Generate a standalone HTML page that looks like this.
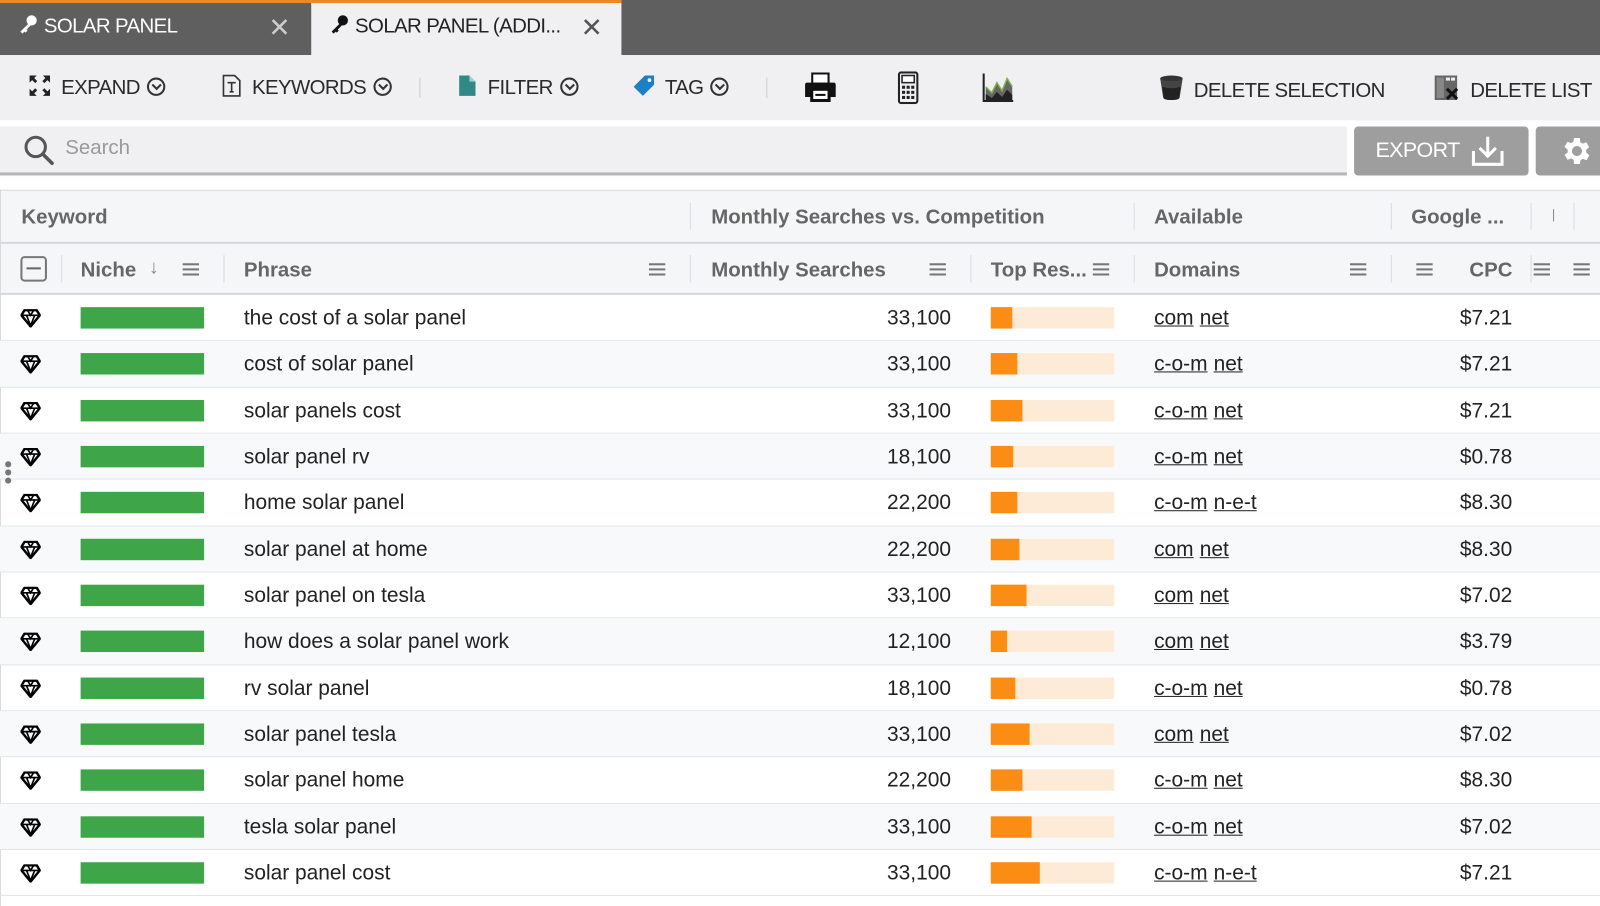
<!DOCTYPE html>
<html><head><meta charset="utf-8">
<style>
*{margin:0;padding:0;box-sizing:border-box}
body{width:1600px;height:884px;overflow:hidden;background:#fff;font-family:"Liberation Sans",sans-serif;color:#222;position:relative}
#w{position:absolute;left:0;top:0;width:1568px;height:884px;transform:scale(1.0204);transform-origin:0 0}
.a{position:absolute}
.n{font-family:"Liberation Sans Narrow","Liberation Sans",sans-serif;letter-spacing:-0.6px}
.tb{font-size:20px;color:#2a2a2a;top:73px;white-space:nowrap}
.chev{display:inline-block;width:18px;height:18px;border:2px solid #333;border-radius:50%;vertical-align:-2px;position:relative;margin-left:2px}
.chev:after{content:"";position:absolute;left:4px;top:2px;width:5px;height:5px;border-right:2px solid #333;border-bottom:2px solid #333;transform:rotate(45deg)}
.hd{color:#666;font-size:20px;font-weight:bold}
.vs{position:absolute;width:1px;background:#d8dce0}
.mn{position:absolute;width:16px;height:12px;border-top:2px solid #777;border-bottom:2px solid #777}
.mn:after{content:"";position:absolute;left:0;right:0;top:3px;border-top:2px solid #777}
.r{position:absolute;left:0;width:1600px;height:45.33px;border-bottom:1px solid #e2e5e8}
.r.o{background:#f8f9fb}
.r div{position:absolute}
.g{left:79px;top:12px;width:121px;height:21px;background:#3ea648}
.p{left:239px;top:11px;font-size:20.5px;color:#222}
.m{right:668px;top:11px;font-size:20.5px}
.bg{left:971px;top:12px;width:121px;height:21px;background:#fdebd8}
.ob{left:971px;top:12px;height:21px;background:#fb8c14}
.d{left:1131px;top:11px;font-size:20.5px}
.d u{margin-right:6px;text-decoration-thickness:1px}
.c{right:118px;top:11px;font-size:20.5px}
.dm{left:20px;top:14px}
</style></head><body><div id="w">
<div class="a" style="left:0;top:0;width:1600px;height:54px;background:#5f5f5f"></div>
<div class="a" style="left:0;top:0;width:305px;height:3px;background:#e88a2a"></div>
<div class="a" style="left:305px;top:0;width:304px;height:54px;background:#f0f0f2;border-top:3px solid #e88a2a"></div>
<div class="a n" style="left:18px;top:14px;font-size:20px;color:#fff">
<svg width="20" height="20" viewBox="0 0 20 20" style="vertical-align:-2px"><circle cx="13" cy="6" r="5" fill="#fff"/><path d="M10 9 L2 17 L4 19 L6 17 L7 18 L9 16 L8 15 L12 11Z" fill="#fff"/></svg> SOLAR PANEL</div>
<div class="a" style="left:263px;top:12px;font-size:26px;color:#ccc">✕</div>
<div class="a n" style="left:323px;top:14px;font-size:20px;color:#222">
<svg width="20" height="20" viewBox="0 0 20 20" style="vertical-align:-2px"><circle cx="13" cy="6" r="5" fill="#111"/><path d="M10 9 L2 17 L4 19 L6 17 L7 18 L9 16 L8 15 L12 11Z" fill="#111"/></svg> SOLAR PANEL (ADDI...</div>
<div class="a" style="left:569px;top:12px;font-size:26px;color:#555">✕</div>
<div class="a" style="left:0;top:54px;width:1600px;height:64px;background:#f0f0f2"></div>
<div class="a tb n" style="left:28px"><svg width="22" height="22" viewBox="0 0 22 22" style="vertical-align:-3px"><path d="M1 1h7l-2.5 2.5 3 3-2 2-3-3L1 8zM21 1v7l-2.5-2.5-3 3-2-2 3-3L14 1zM1 21v-7l2.5 2.5 3-3 2 2-3 3L8 21zM21 21h-7l2.5-2.5-3-3 2-2 3 3L21 14z" fill="#222"/></svg>&nbsp; EXPAND <span class="chev"></span></div>
<div class="a tb n" style="left:217px"><svg width="20" height="22" viewBox="0 0 20 22" style="vertical-align:-3px"><path d="M2 1h11l5 5v15H2z" fill="none" stroke="#333" stroke-width="1.6"/><path d="M6 8h8M10 8v9M8 17h4" stroke="#333" stroke-width="1.6"/></svg>&nbsp; KEYWORDS <span class="chev"></span></div>
<div class="a" style="left:411px;top:76px;width:1px;height:20px;background:#ccc"></div>
<div class="a tb n" style="left:448px"><svg width="20" height="22" viewBox="0 0 20 22" style="vertical-align:-3px"><path d="M2 1h10l6 6v14H2z" fill="#2f8a86"/><path d="M12 1v6h6" fill="#9cd0cc"/></svg>&nbsp; FILTER <span class="chev"></span></div>
<div class="a tb n" style="left:620px"><svg width="22" height="22" viewBox="0 0 22 22" style="vertical-align:-3px"><path d="M12 1h9v9L10 21 1 12z" fill="#1d7fc4"/><circle cx="16.5" cy="5.5" r="1.8" fill="#fff"/></svg>&nbsp; TAG <span class="chev"></span></div>
<div class="a" style="left:751px;top:76px;width:1px;height:20px;background:#ccc"></div>
<svg class="a" style="left:788px;top:71px" width="32" height="30" viewBox="0 0 32 30"><rect x="8" y="1" width="16" height="10" fill="#fff" stroke="#111" stroke-width="2"/><path d="M3 10h26q2 0 2 2v12h-5v5H6v-5H1V12q0-2 2-2z" fill="#111"/><rect x="9" y="18" width="14" height="8" fill="#fff"/><rect x="11" y="21" width="10" height="2" fill="#111"/></svg>
<svg class="a" style="left:879px;top:70px" width="22" height="32" viewBox="0 0 22 32"><rect x="2" y="1" width="18" height="30" rx="2" fill="none" stroke="#222" stroke-width="2"/><rect x="5" y="4" width="12" height="7" fill="#fff" stroke="#222" stroke-width="1.5"/><g fill="#222"><rect x="5" y="14" width="3" height="3"/><rect x="9.5" y="14" width="3" height="3"/><rect x="14" y="14" width="3" height="3"/><rect x="5" y="19" width="3" height="3"/><rect x="9.5" y="19" width="3" height="3"/><rect x="14" y="19" width="3" height="3"/><rect x="5" y="24" width="3" height="3"/><rect x="9.5" y="24" width="3" height="3"/><rect x="14" y="24" width="3" height="3"/></g></svg>
<svg class="a" style="left:962px;top:71px" width="32" height="30" viewBox="0 0 32 30"><path d="M2 1v27h29" fill="none" stroke="#222" stroke-width="2"/><path d="M4 27V14l6 6 5-10 5 8 5-12 5 8v13z" fill="#666"/><path d="M4 27v-6l6 4 5-6 5 5 5-7 5 5v5z" fill="#222"/><path d="M4 14l6 6 5-10 5 8 5-12 5 8" fill="none" stroke="#7fb24a" stroke-width="1.5"/></svg>
<div class="a tb n" style="left:1136px"><svg width="24" height="26" viewBox="0 0 24 26" style="vertical-align:-4px"><ellipse cx="12" cy="4" rx="11" ry="3" fill="#333"/><path d="M1 4l3 19q1 2 8 2t8-2l3-19q-5 3-11 3T1 4z" fill="#444"/><path d="M3 12q9 3 18 0l-1.5 11q-1 2-7.5 2t-7.5-2z" fill="#222"/></svg>&nbsp; DELETE SELECTION</div>
<div class="a tb n" style="left:1405px"><svg width="26" height="26" viewBox="0 0 26 26" style="vertical-align:-4px"><rect x="1" y="1" width="22" height="24" fill="#666"/><rect x="12" y="3" width="4" height="3" fill="#eee"/><rect x="17" y="3" width="4" height="3" fill="#eee"/><rect x="3" y="3" width="7" height="20" fill="#888"/><path d="M13 14l10 10M23 14L13 24" stroke="#111" stroke-width="3"/></svg>&nbsp; DELETE LIST</div>
<div class="a" style="left:0;top:118px;width:1600px;height:68px;background:#fff"></div>
<div class="a" style="left:0;top:124px;width:1320px;height:48px;background:#f0f0f2;border-bottom:3px solid #b5b5b5"></div>
<svg class="a" style="left:22px;top:131px" width="32" height="32" viewBox="0 0 32 32"><circle cx="13" cy="13" r="9.5" fill="none" stroke="#555" stroke-width="3"/><path d="M20 20l9 9" stroke="#555" stroke-width="3.5" stroke-linecap="round"/></svg>
<div class="a" style="left:64px;top:134px;font-size:20px;color:#999">Search</div>
<div class="a n" style="left:1327px;top:124px;width:171px;height:48px;background:#9e9e9e;border-radius:4px;color:#fff;font-size:21px;padding:12px 0 0 21px">EXPORT<svg width="34" height="32" viewBox="0 0 34 32" style="position:absolute;left:114px;top:8px"><path d="M3 16v13h28V16M17 2v19M9 13l8 8 8-8" fill="none" stroke="#fff" stroke-width="3"/></svg></div>
<div class="a" style="left:1505px;top:124px;width:95px;height:48px;background:#9e9e9e;border-radius:4px"></div>
<svg class="a" style="left:1527px;top:131px" width="34" height="34" viewBox="0 0 24 24"><path fill="#fff" d="M19.4 13a7.5 7.5 0 000-2l2.1-1.6-2-3.5-2.5 1a7 7 0 00-1.7-1L15 3h-4l-.4 2.6a7 7 0 00-1.7 1l-2.5-1-2 3.5L6.6 11a7.5 7.5 0 000 2l-2.1 1.6 2 3.5 2.5-1a7 7 0 001.7 1L11 21h4l.4-2.6a7 7 0 001.7-1l2.5 1 2-3.5zM13 15.5a3.5 3.5 0 110-7 3.5 3.5 0 010 7z"/></svg>
<div class="a" style="left:0;top:186px;width:1600px;height:102px;background:#f5f6f8;border-top:1px solid #d8dbde;border-left:1px solid #d8dbde"></div>
<div class="a" style="left:0;top:237px;width:1600px;height:2px;background:#d5d8dc"></div>
<div class="a" style="left:0;top:287px;width:1600px;height:2px;background:#d5d8dc"></div>
<div class="a hd" style="left:21px;top:202px">Keyword</div>
<div class="vs" style="left:676px;top:199px;height:26px"></div>
<div class="a hd" style="left:697px;top:202px">Monthly Searches vs. Competition</div>
<div class="vs" style="left:1111px;top:199px;height:26px"></div>
<div class="a hd" style="left:1131px;top:202px">Available</div>
<div class="vs" style="left:1363px;top:199px;height:26px"></div>
<div class="a hd" style="left:1383px;top:202px">Google ...</div>
<div class="vs" style="left:1500px;top:199px;height:26px"></div>
<div class="a" style="left:1522px;top:205px;width:1px;height:12px;background:#888"></div>
<div class="vs" style="left:1542px;top:199px;height:26px"></div>
<div class="a" style="left:20px;top:251px;width:26px;height:25px;border:2px solid #777;border-radius:4px"></div>
<div class="a" style="left:26px;top:262px;width:14px;height:2px;background:#666"></div>
<div class="vs" style="left:60px;top:250px;height:27px"></div>
<div class="a hd" style="left:79px;top:254px">Niche</div>
<div class="a" style="left:146px;top:252px;font-size:19px;color:#888">↓</div>
<div class="mn" style="left:179px;top:258px"></div>
<div class="vs" style="left:219px;top:250px;height:27px"></div>
<div class="a hd" style="left:239px;top:254px">Phrase</div>
<div class="mn" style="left:636px;top:258px"></div>
<div class="vs" style="left:676px;top:250px;height:27px"></div>
<div class="a hd" style="left:697px;top:254px">Monthly Searches</div>
<div class="mn" style="left:911px;top:258px"></div>
<div class="vs" style="left:951px;top:250px;height:27px"></div>
<div class="a hd" style="left:971px;top:254px">Top Res...</div>
<div class="mn" style="left:1071px;top:258px"></div>
<div class="vs" style="left:1111px;top:250px;height:27px"></div>
<div class="a hd" style="left:1131px;top:254px">Domains</div>
<div class="mn" style="left:1323px;top:258px"></div>
<div class="vs" style="left:1363px;top:250px;height:27px"></div>
<div class="mn" style="left:1388px;top:258px"></div>
<div class="a hd" style="left:1440px;top:254px">CPC</div>
<div class="vs" style="left:1500px;top:250px;height:27px"></div>
<div class="mn" style="left:1503px;top:258px"></div>
<div class="mn" style="left:1542px;top:258px"></div>
<div class="a" style="left:0;top:288px;width:1px;height:600px;background:#d8dbde"></div>
<svg width="0" height="0" style="position:absolute"><defs><symbol id="dia" viewBox="0 0 20 18"><path d="M4 1h12l3 5-9 11L1 6z" fill="none" stroke="#000" stroke-width="2.4" stroke-linejoin="round"/><path d="M1 6h18M7 1l3 5 3-5M6 6l4 10 4-10" fill="none" stroke="#000" stroke-width="1.6"/></symbol></defs></svg>
<div style="position:absolute;left:0;top:289px">
<div class="r" style="top:0"><div class="dm"><svg width="20" height="18"><use href="#dia"/></svg></div><div class="g"></div><div class="p">the cost of a solar panel</div><div class="m">33,100</div><div class="bg"></div><div class="ob" style="width:21px"></div><div class="d"><u>com</u><u>net</u></div><div class="c">$7.21</div></div>
<div class="r o" style="top:45.33px"><div class="dm"><svg width="20" height="18"><use href="#dia"/></svg></div><div class="g"></div><div class="p">cost of solar panel</div><div class="m">33,100</div><div class="bg"></div><div class="ob" style="width:26px"></div><div class="d"><u>c-o-m</u><u>net</u></div><div class="c">$7.21</div></div>
<div class="r" style="top:90.67px"><div class="dm"><svg width="20" height="18"><use href="#dia"/></svg></div><div class="g"></div><div class="p">solar panels cost</div><div class="m">33,100</div><div class="bg"></div><div class="ob" style="width:31px"></div><div class="d"><u>c-o-m</u><u>net</u></div><div class="c">$7.21</div></div>
<div class="r o" style="top:136px"><div class="dm"><svg width="20" height="18"><use href="#dia"/></svg></div><div class="g"></div><div class="p">solar panel rv</div><div class="m">18,100</div><div class="bg"></div><div class="ob" style="width:22px"></div><div class="d"><u>c-o-m</u><u>net</u></div><div class="c">$0.78</div></div>
<div class="r" style="top:181.33px"><div class="dm"><svg width="20" height="18"><use href="#dia"/></svg></div><div class="g"></div><div class="p">home solar panel</div><div class="m">22,200</div><div class="bg"></div><div class="ob" style="width:26px"></div><div class="d"><u>c-o-m</u><u>n-e-t</u></div><div class="c">$8.30</div></div>
<div class="r o" style="top:226.67px"><div class="dm"><svg width="20" height="18"><use href="#dia"/></svg></div><div class="g"></div><div class="p">solar panel at home</div><div class="m">22,200</div><div class="bg"></div><div class="ob" style="width:28px"></div><div class="d"><u>com</u><u>net</u></div><div class="c">$8.30</div></div>
<div class="r" style="top:272px"><div class="dm"><svg width="20" height="18"><use href="#dia"/></svg></div><div class="g"></div><div class="p">solar panel on tesla</div><div class="m">33,100</div><div class="bg"></div><div class="ob" style="width:35px"></div><div class="d"><u>com</u><u>net</u></div><div class="c">$7.02</div></div>
<div class="r o" style="top:317.33px"><div class="dm"><svg width="20" height="18"><use href="#dia"/></svg></div><div class="g"></div><div class="p">how does a solar panel work</div><div class="m">12,100</div><div class="bg"></div><div class="ob" style="width:16px"></div><div class="d"><u>com</u><u>net</u></div><div class="c">$3.79</div></div>
<div class="r" style="top:362.67px"><div class="dm"><svg width="20" height="18"><use href="#dia"/></svg></div><div class="g"></div><div class="p">rv solar panel</div><div class="m">18,100</div><div class="bg"></div><div class="ob" style="width:24px"></div><div class="d"><u>c-o-m</u><u>net</u></div><div class="c">$0.78</div></div>
<div class="r o" style="top:408px"><div class="dm"><svg width="20" height="18"><use href="#dia"/></svg></div><div class="g"></div><div class="p">solar panel tesla</div><div class="m">33,100</div><div class="bg"></div><div class="ob" style="width:38px"></div><div class="d"><u>com</u><u>net</u></div><div class="c">$7.02</div></div>
<div class="r" style="top:453.33px"><div class="dm"><svg width="20" height="18"><use href="#dia"/></svg></div><div class="g"></div><div class="p">solar panel home</div><div class="m">22,200</div><div class="bg"></div><div class="ob" style="width:31px"></div><div class="d"><u>c-o-m</u><u>net</u></div><div class="c">$8.30</div></div>
<div class="r o" style="top:498.67px"><div class="dm"><svg width="20" height="18"><use href="#dia"/></svg></div><div class="g"></div><div class="p">tesla solar panel</div><div class="m">33,100</div><div class="bg"></div><div class="ob" style="width:40px"></div><div class="d"><u>c-o-m</u><u>net</u></div><div class="c">$7.02</div></div>
<div class="r" style="top:544px"><div class="dm"><svg width="20" height="18"><use href="#dia"/></svg></div><div class="g"></div><div class="p">solar panel cost</div><div class="m">33,100</div><div class="bg"></div><div class="ob" style="width:48px"></div><div class="d"><u>c-o-m</u><u>n-e-t</u></div><div class="c">$7.21</div></div>
</div>
<div class="a" style="left:5px;top:452px;width:6px;height:6px;border-radius:50%;background:#777"></div>
<div class="a" style="left:5px;top:460px;width:6px;height:6px;border-radius:50%;background:#777"></div>
<div class="a" style="left:5px;top:468px;width:6px;height:6px;border-radius:50%;background:#777"></div>
</div></body></html>
